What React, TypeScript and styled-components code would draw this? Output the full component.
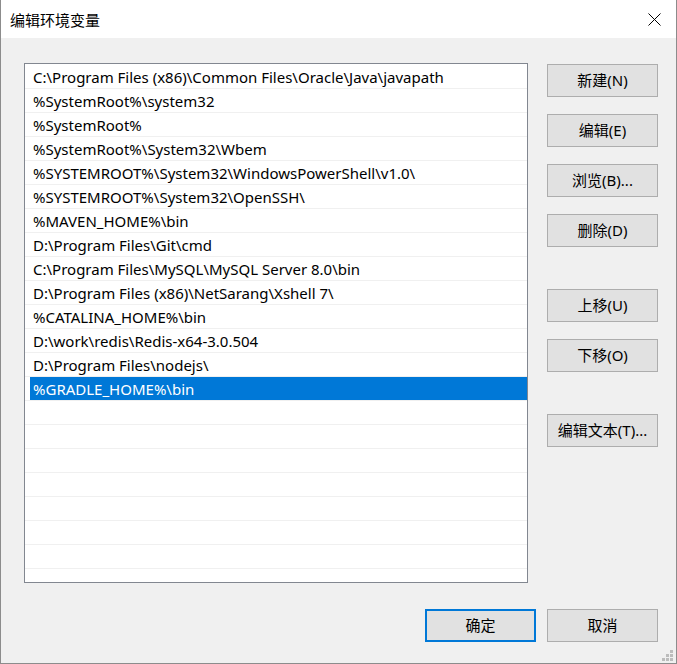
import React from 'react';
import styled, { createGlobalStyle } from 'styled-components';

const GlobalStyle = createGlobalStyle`
    * {
        box-sizing: border-box;
    }
    body {
        margin: 0;
        background: #ffffff;
        font-family: "Noto Sans", "Noto Sans CJK SC", sans-serif;
        font-size: 15px;
        color: #000000;
    }
`;

const PATHS = [
    'C:\\Program Files (x86)\\Common Files\\Oracle\\Java\\javapath',
    '%SystemRoot%\\system32',
    '%SystemRoot%',
    '%SystemRoot%\\System32\\Wbem',
    '%SYSTEMROOT%\\System32\\WindowsPowerShell\\v1.0\\',
    '%SYSTEMROOT%\\System32\\OpenSSH\\',
    '%MAVEN_HOME%\\bin',
    'D:\\Program Files\\Git\\cmd',
    'C:\\Program Files\\MySQL\\MySQL Server 8.0\\bin',
    'D:\\Program Files (x86)\\NetSarang\\Xshell 7\\',
    '%CATALINA_HOME%\\bin',
    'D:\\work\\redis\\Redis-x64-3.0.504',
    'D:\\Program Files\\nodejs\\',
    '%GRADLE_HOME%\\bin',
];

const EMPTY_ROWS = 7;
const SELECTED = 13;

const Window = styled.div`
    position: relative;
    width: 677px;
    height: 664px;
    display: flex;
    flex-direction: column;
    background: #f0f0f0;
    border: 1px solid #8c8c8c;
    border-top: none;
    overflow: hidden;
`;

const TitleBar = styled.div`
    height: 38px;
    flex-shrink: 0;
    display: flex;
    align-items: center;
    justify-content: space-between;
    background: #ffffff;
    padding: 0 0 0 9px;
`;

const Title = styled.span`
    font-family: "Noto Sans CJK SC", sans-serif;
    font-size: 15px;
    line-height: 1;
    margin-top: 1px;
`;

const CloseButton = styled.button`
    width: 46px;
    height: 38px;
    margin-right: -1px;
    border: none;
    background: transparent;
    display: flex;
    align-items: center;
    justify-content: center;
    padding: 0;
`;

const Body = styled.div`
    flex: 1;
    display: flex;
    flex-direction: column;
    padding: 25px 18px 0 23px;
`;

const Main = styled.div`
    display: flex;
    gap: 19px;
`;

const ListBox = styled.div`
    width: 504px;
    height: 520px;
    background: #ffffff;
    border: 1px solid #828790;
    padding-top: 1px;
    display: flex;
    flex-direction: column;
`;

const Row = styled.div`
    height: 24px;
    flex-shrink: 0;
    border-bottom: 1px solid #f0f0f0;
    padding-left: 5px;
    display: flex;
`;

const RowText = styled.div<{ $selected?: boolean }>`
    flex: 1;
    display: flex;
    align-items: center;
    padding: 1px 0 0 3px;
    white-space: nowrap;
    line-height: 1;
    background: ${(p) => (p.$selected ? '#0078d7' : 'transparent')};
    color: ${(p) => (p.$selected ? '#ffffff' : '#000000')};
`;

const ButtonColumn = styled.div`
    width: 111px;
    padding-top: 1px;
    display: flex;
    flex-direction: column;
    gap: 17px;
`;

const Button = styled.button<{ $gapBefore?: boolean; $default?: boolean }>`
    width: 111px;
    height: 33px;
    margin-top: ${(p) => (p.$gapBefore ? '25px' : '0')};
    background: #e1e1e1;
    border: ${(p) => (p.$default ? '2px solid #0078d7' : '1px solid #adadad')};
    font-family: "Noto Sans", "Noto Sans CJK SC", sans-serif;
    font-size: 15px;
    color: #000000;
    padding: 0;
    line-height: 1;
    display: flex;
    align-items: center;
    justify-content: center;
`;

const Footer = styled.div`
    display: flex;
    justify-content: flex-end;
    gap: 11px;
    margin-top: 26px;
`;

const Grip = styled.svg`
    position: absolute;
    right: 2px;
    bottom: 1px;
`;

const CloseIcon = () => (
    <svg width="13" height="13" viewBox="0 0 13 13">
        <path d="M0.5 0.5 L12.5 12.5 M12.5 0.5 L0.5 12.5" stroke="#000" strokeWidth="1" fill="none" />
    </svg>
);

const App = () => {
    return (
        <>
            <GlobalStyle />
            <Window>
                <TitleBar>
                    <Title>编辑环境变量</Title>
                    <CloseButton aria-label="close">
                        <CloseIcon />
                    </CloseButton>
                </TitleBar>
                <Body>
                    <Main>
                        <ListBox>
                            {PATHS.map((p, i) => (
                                <Row key={p}>
                                    <RowText $selected={i === SELECTED}>{p}</RowText>
                                </Row>
                            ))}
                            {Array.from({ length: EMPTY_ROWS }).map((_, i) => (
                                <Row key={`empty-${i}`}>
                                    <RowText />
                                </Row>
                            ))}
                        </ListBox>
                        <ButtonColumn>
                            <Button>新建(N)</Button>
                            <Button>编辑(E)</Button>
                            <Button>浏览(B)...</Button>
                            <Button>删除(D)</Button>
                            <Button $gapBefore>上移(U)</Button>
                            <Button>下移(O)</Button>
                            <Button $gapBefore>编辑文本(T)...</Button>
                        </ButtonColumn>
                    </Main>
                    <Footer>
                        <Button $default>确定</Button>
                        <Button>取消</Button>
                    </Footer>
                </Body>
                <Grip width="12" height="12" viewBox="0 0 12 12">
                    <g fill="#bcbcbc">
                        <rect x="8" y="0" width="3" height="3" />
                        <rect x="4" y="4" width="3" height="3" />
                        <rect x="8" y="4" width="3" height="3" />
                        <rect x="0" y="8" width="3" height="3" />
                        <rect x="4" y="8" width="3" height="3" />
                        <rect x="8" y="8" width="3" height="3" />
                    </g>
                </Grip>
            </Window>
        </>
    );
};

export default App;
